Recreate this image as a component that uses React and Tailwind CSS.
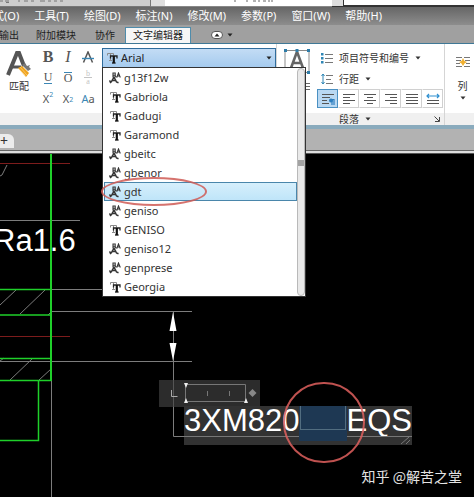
import React, { useState } from 'react';
import clsx from 'clsx';

const MENUS = ['式(O)', '工具(T)', '绘图(D)', '标注(N)', '修改(M)', '参数(P)', '窗口(W)', '帮助(H)'];

const FONTS = [
  { name: 'g13f12w', kind: 'shx' },
  { name: 'Gabriola', kind: 'ttf' },
  { name: 'Gadugi', kind: 'ttf' },
  { name: 'Garamond', kind: 'ttf' },
  { name: 'gbeitc', kind: 'shx' },
  { name: 'gbenor', kind: 'shx' },
  { name: 'gdt', kind: 'shx' },
  { name: 'geniso', kind: 'shx' },
  { name: 'GENISO', kind: 'ttf' },
  { name: 'geniso12', kind: 'shx' },
  { name: 'genprese', kind: 'shx' },
  { name: 'Georgia', kind: 'ttf' },
];

// Line segments of each align icon: [x1, x2] from top to bottom
const ALIGNS = [
  { label: '左对齐', lines: [[1, 13], [1, 8], [1, 13], [1, 8]] },
  { label: '居中', lines: [[1, 13], [4, 10], [1, 13], [4, 10]] },
  { label: '右对齐', lines: [[1, 13], [6, 13], [1, 13], [6, 13]] },
  { label: '对正', lines: [[1, 13], [1, 13], [1, 13], [1, 13]] },
];

function Caret({ className }) {
  return (
    <svg viewBox="0 0 6 4" className={clsx('h-1 w-1.5 shrink-0', className)} fill="currentColor">
      <path d="M0.5 0.5h5L3 3.5z" />
    </svg>
  );
}

function FontIcon({ kind }) {
  if (kind === 'ttf') {
    return (
      <svg viewBox="0 0 12 12" className="h-3 w-3 shrink-0" fill="none">
        <path d="M1.5 3.5v-2h6v2M4.500 1.500v7M3 8.500h3" stroke="#8a8a8a" />
        <path d="M4.500 6.500V4h6.500v2.500" stroke="#222" strokeWidth="1.300" />
        <path d="M7.800 4v7" stroke="#111" strokeWidth="2.200" />
        <path d="M6 11h3.600" stroke="#111" strokeWidth="1.300" />
      </svg>
    );
  }
  return (
    <svg viewBox="0 0 12 12" className="h-3 w-3 shrink-0" fill="none" stroke="#333">
      <path d="M1 11l1.500-1.500L5 5l2.500 5 2 .8M2.500 8.500h5M0.500 8.500L2 11" strokeWidth="1.500" />
      <path d="M4 5.500V1h2.200v2.200H4M6 3.200l1.200 2.300M7.800 5.500L9.500 1l1.800 4.500M8.300 4h2.400" strokeWidth="1.100" />
    </svg>
  );
}

function MatchIcon() {
  return (
    <svg viewBox="0 0 26 28" className="h-7 w-[26px]" fill="none">
      <path d="M2 25L11 3h2l5 13" stroke="#555" strokeWidth="4" />
      <path d="M6 17h9" stroke="#555" strokeWidth="3" />
      <path d="M16 15l6 6 3-2-2-2 1-2-3 1-2-3z" fill="#777" />
      <path d="M12 18l4-2 7 7-3 4z" fill="#f0a31c" />
      <path d="M14 17l7 8M12.500 18.500l7 7" stroke="#fbd58a" strokeWidth="0.700" />
    </svg>
  );
}

function FrameIcon() {
  return (
    <svg viewBox="0 0 28 28" className="h-7 w-7" fill="none">
      <path d="M2 2.500h24v22H2z" stroke="#8b8b8b" />
      <path d="M8 20L13.500 5h1L20 20M9.500 15h9" stroke="#666" strokeWidth="2.600" />
      <path d="M1 1h3v3H1zM12.500 1h3v3h-3zM24 1h3v3h-3zM24 23h3v3h-3zM1 23h3v3H1z" fill="#2e7ca8" />
    </svg>
  );
}

function FormatButtons() {
  const cell = 'flex h-[21px] w-5 items-center justify-center font-["Liberation_Serif",serif] text-[#555]';
  return (
    <div className="grid grid-cols-[20px_20px_22px] content-start pt-0.5">
      <button aria-label="粗体" className={clsx(cell, 'text-base font-bold')}>B</button>
      <button aria-label="斜体" className={clsx(cell, 'text-base italic')}>I</button>
      <button aria-label="删除线" className={cell}>
        <svg viewBox="0 0 12 12" className="h-3 w-3" fill="none">
          <path d="M1.500 11.500L6 1l4.500 10.500" stroke="#555" strokeWidth="1.500" />
          <path d="M0 7.500h12" stroke="#3b87b5" strokeWidth="1.400" />
        </svg>
      </button>
      <button aria-label="下划线" className={cell}>
        <span className="border-b border-[#3b87b5] text-xs leading-[11px]">U</span>
      </button>
      <button aria-label="上划线" className={cell}>
        <span className="border-t border-[#3b87b5] text-xs leading-[11px]">O</span>
      </button>
      <button aria-label="堆叠" disabled className={cell}>
        <span className="flex flex-col items-center text-[8px] leading-[7px] text-[#c4c4c4]">
          <span className="border-b border-[#c4c4c4] px-0.5">b</span>
          <span>a</span>
        </span>
      </button>
      <button aria-label="上标" className={clsx(cell, 'font-["Noto_Sans",sans-serif] text-[11px]')}>
        X<sup className="text-[7px] text-[#3b87b5]">2</sup>
      </button>
      <button aria-label="下标" className={clsx(cell, 'font-["Noto_Sans",sans-serif] text-[11px]')}>
        X<sub className="text-[7px] text-[#3b87b5]">2</sub>
      </button>
      <button aria-label="更改大小写" className={clsx(cell, 'font-["Noto_Sans",sans-serif] text-[11px]')}>
        <span className="text-[#3b87b5]">A</span>a
      </button>
    </div>
  );
}

function FontPicker({ font, onChange }) {
  const [active, setActive] = useState('gdt');

  return (
    <div className="relative mt-1 h-5 w-[174px] shrink-0">
      <select
        aria-label="字体"
        value={font}
        onChange={(e) => onChange(e.target.value)}
        className="h-5 w-full appearance-none border border-[#2f6c9c] bg-linear-to-b from-[#c3dcf5] to-[#a5cbee] pl-[18px] text-[11px] leading-4 text-[#222] outline-none"
      >
        <option>Arial</option>
        {FONTS.map((f) => (
          <option key={f.name}>{f.name}</option>
        ))}
      </select>
      <span className="pointer-events-none absolute top-1 left-1">
        <FontIcon kind="ttf" />
      </span>
      <Caret className="pointer-events-none absolute top-2 right-1 text-[#222]" />

      {/* Opened font list */}
      <div className="absolute top-[19px] left-0 z-10 flex w-[204px] border border-[#333] bg-white">
        <ul className="flex-1 pl-px">
          {FONTS.map((f) => (
            <li key={f.name} className="relative">
              <button
                onClick={() => {
                  setActive(f.name);
                  onChange(f.name);
                }}
                className={clsx(
                  'flex h-[19px] w-full items-center gap-[3px] border pl-1 text-left text-[11px] leading-4 text-[#333]',
                  active === f.name ? 'border-[#4a86ab] bg-linear-to-b from-[#d6effc] to-[#bfe5f9]' : 'border-transparent'
                )}
              >
                <FontIcon kind={f.kind} />
                {f.name}
              </button>
              {f.name === 'gdt' && (
                <span className="pointer-events-none absolute -top-[5px] -left-[3px] h-[29px] w-[106px] rounded-[50%] border-2 border-[#cf5a55]/85" />
              )}
            </li>
          ))}
        </ul>
        {/* Scrollbar */}
        <div className="flex w-2 flex-col rounded-sm border border-[#b9b9b9] bg-[#e9e9e9] pt-[91px]">
          <div className="h-1.5 bg-[#a2a2a2]" />
        </div>
      </div>
    </div>
  );
}

function ParagraphPanel() {
  const alignButton = 'flex h-[19px] w-[21px] items-center justify-center border border-[#d0d0d0] border-l-transparent';
  return (
    <section className="flex w-[134px] shrink-0 flex-col border-r border-[#d5d5d5] pl-1.5">
      <button className="mt-1 flex h-[19px] items-center gap-1.5 pl-1 text-[#333]">
        <svg viewBox="0 0 12 12" className="h-3 w-3" fill="none">
          <path d="M4 2.500h8M4 6.500h8M4 10.500h8" stroke="#777" />
          <path d="M0 1h2.500v2.500H0zM0 5h2.500v2.500H0zM0 9h2.500v2.500H0z" fill="#2e86b5" />
        </svg>
        <span>项目符号和编号</span>
        <Caret />
      </button>
      <button className="mt-0.5 flex h-[19px] items-center gap-1.5 pl-1 text-[#333]">
        <svg viewBox="0 0 12 12" className="h-3 w-3" fill="none">
          <path d="M5 2.500h7M5 6.500h5M5 10.500h7" stroke="#777" />
          <path d="M2 1v10M0.500 3L2 1l1.500 2M0.500 9L2 11l1.500-2" stroke="#2e86b5" />
        </svg>
        <span>行距</span>
        <Caret />
      </button>
      <div className="mt-px flex">
        <button aria-label="默认" className="flex h-[19px] w-[21px] items-center justify-center border border-[#4a90c2] bg-[#b9d8f2]">
          <svg viewBox="0 0 14 12" className="h-3 w-3.5" fill="none">
            <path d="M1 1.500h12M1 4.500h8M1 7.500h5M1 10.500h7" stroke="#555" />
            <path d="M13 6v6M11 6v6M13.500 6.500h-3" stroke="#2e7fc0" strokeWidth="1.200" />
            <circle cx="10" cy="7.500" r="2" fill="#2e7fc0" />
          </svg>
        </button>
        {ALIGNS.map((a) => (
          <button key={a.label} aria-label={a.label} className={alignButton}>
            <svg viewBox="0 0 14 12" className="h-3 w-3.5" stroke="#555">
              {a.lines.map(([x1, x2], i) => (
                <path key={i} d={`M${x1} ${1.5 + i * 3}H${x2}`} />
              ))}
            </svg>
          </button>
        ))}
        <button aria-label="分散对齐" className={alignButton}>
          <svg viewBox="0 0 14 12" className="h-3 w-3.5" fill="none">
            <path d="M1 3h12M3 1L1 3l2 2M11 1l2 2-2 2" stroke="#2e8fd0" strokeWidth="1.200" />
            <path d="M1 7.500h12M1 10.500h12" stroke="#555" />
          </svg>
        </button>
      </div>
    </section>
  );
}

function Ribbon() {
  const [font, setFont] = useState('Arial');

  return (
    <div className="border-t border-[#3f7896] bg-white text-[10px] leading-3">
      <div className="flex h-[69px]">
        <button className="flex w-[38px] shrink-0 flex-col items-center gap-0.5 pt-1.5 text-[#333]">
          <MatchIcon />
          <span>匹配</span>
        </button>
        <FormatButtons />
        <div className="w-0.5" />
        <FontPicker font={font} onChange={setFont} />
        <div className="flex w-[35px] shrink-0 flex-col items-end border-l border-[#d5d5d5] pt-1">
          <FrameIcon />
          <svg viewBox="0 0 8 10" className="mt-1.5 h-2.5 w-2" stroke="#666">
            <path d="M0 1.500h7M0 4.500h7M0 7.500h7" />
          </svg>
        </div>
        <ParagraphPanel />
        <button className="flex flex-1 flex-col items-center pt-3 pl-1.5 text-[#333]">
          <svg viewBox="0 0 14 14" className="mb-2.5 h-3.5 w-3.5" fill="none">
            <path d="M0 1.500h6M8 1.500h6M0 4.500h5M9 4.500h5M0 7.500h4M10 7.500h4M0 10.500h6M8 10.500h6" stroke="#777" />
            <path d="M7 2l1.500 3L11 6 8.500 7.500 7 10 5.500 7.500 3 6l2.500-1z" fill="#f0b030" />
          </svg>
          <span>列</span>
          <Caret className="mt-1" />
        </button>
      </div>
      {/* Panel titles */}
      <div className="flex h-3 items-center bg-[#f0f0f0] text-[#333]">
        <div className="w-[309px] shrink-0" />
        <div className="flex h-3 w-[136px] shrink-0 items-center border-r border-[#d5d5d5] pl-[30px]">
          <span>段落</span>
          <Caret className="ml-1.5" />
          <svg viewBox="0 0 6 6" className="mr-1 ml-auto h-1.5 w-1.5" fill="none" stroke="#444">
            <path d="M0.500 0.500L5 5M5.500 1v4.500H1" />
          </svg>
        </div>
      </div>
      <div className="h-1 bg-[#8aabbd]" />
    </div>
  );
}

function Drawing() {
  return (
    <svg width="474" height="343" viewBox="0 154 474 343" className="absolute top-0 left-0" fill="none">
      <g stroke="#7c7c7c">
        <path d="M0 176l2-1 5-10M0 220.500h80M51 289.500h51M51 311.500h141M0 361.500h192" />
        <path d="M0 305l16-15M20 314l25-24M10 380l22-21M39 380l12-11M0 361l4-3M48 315l3-3" />
        <path d="M51.500 380v117M173.500 312v124.500h238" />
      </g>
      <path d="M0 163.500h70M0 336.500h70" stroke="#7d1c1c" />
      <g stroke="#1fd02a">
        <path d="M51 154v227" strokeWidth="2" />
        <path d="M0 289.500h51M0 315h51M0 358.500h51M0 380.500h51M38.500 380v60.500H0" strokeWidth="1.500" />
      </g>
      <path d="M173 312l3.500 19h-7zM173 361l3.500-18h-7z" fill="#fff" />
    </svg>
  );
}

function TextRuler() {
  return (
    <svg width="101" height="27" viewBox="0 0 101 27" className="absolute top-[226px] left-[159px] bg-[#2c2c2c]" fill="none">
      <path d="M14.500 0v27" stroke="#555" />
      <path d="M12.500 10v6.500h6" stroke="#aaa" />
      <path d="M26.500 4.500h60v17h-60zM48.500 11v5M70.500 11v5" stroke="#777" />
      <path d="M25 3h4l-2 5zM25 23h4l-2-5zM85 23h4l-2-5z" fill="#eee" />
      <path d="M93.500 9l4 4-4 4-4-4z" fill="#888" />
    </svg>
  );
}

function Canvas() {
  return (
    <main className="relative h-[343px] overflow-hidden bg-black font-['Liberation_Sans',sans-serif] text-white">
      <Drawing />
      <p className="absolute top-[69px] -left-[7px] text-[31px] leading-9">Ra1.6</p>
      <TextRuler />
      {/* In-place text editor */}
      <div className="absolute top-[252px] left-[184px] flex h-[39px] w-[228px] bg-[#323232] text-[31px] leading-[30px]">
        <span>3XM820</span>
        <span className="h-[35px] w-12 bg-[#1e3853]">
          <span className="mx-px block h-6 border border-t-0 border-[#526d80]" />
        </span>
        <span>EQS</span>
        <svg viewBox="0 0 228 10" className="absolute bottom-0 left-0 h-2.5 w-full" fill="none" stroke="#777">
          <path d="M0 1.500h115M163 1.500h65M217 9l8-7M222 9l4-4" />
        </svg>
      </div>
      <span className="absolute top-[228px] left-[283px] h-[81px] w-[82px] rounded-full border-2 border-[#e0605e]/85" />
      <p className="absolute right-3 bottom-[11px] font-['Noto_Sans_CJK_SC',sans-serif] text-sm leading-5 text-[#e4e4e4]">
        知乎 @解苦之堂
      </p>
    </main>
  );
}

export default function App() {
  return (
    <div className="min-h-screen overflow-hidden bg-black font-['Noto_Sans','Noto_Sans_CJK_SC',sans-serif]">
      <div className="flex h-[7px] bg-white">
        <div className="w-[151px] border-r border-b border-[#777] bg-[#cdcdcd]">
          <svg viewBox="0 0 66 3" className="h-[3px] w-[66px]" stroke="#777">
            <path d="M0 1h3M5 1h4M6 2.500h3M19 0v2M24 1h4M31 1h3M40 1h5M48 1h3M54 1h3M60 1h3" />
          </svg>
        </div>
        <div className="w-3.5 border-b border-[#888] bg-[#dedede]" />
        <div className="w-[167px] border-b border-[#888]">
          <svg viewBox="0 0 110 3" className="h-[3px] w-[110px]" stroke="#666">
            <path d="M69 1h2M82 0v2M88 1h3M94 0v2M98 1h3M104 0v2M107 0v2" />
          </svg>
        </div>
        <div className="w-3 border-r border-b border-[#333] bg-[#dedede]" />
        <div className="flex-1 border-b-2 border-[#333]" />
      </div>

      <nav className="flex h-[18px] gap-[15px] overflow-hidden bg-linear-to-b from-[#666] to-[#8d8d8d] text-[11px] leading-[18px] whitespace-nowrap text-white">
        {MENUS.map((m) => (
          <button key={m} className="shrink-0 first:-ml-[7px]">{m}</button>
        ))}
      </nav>

      <div className="flex h-[18px] items-end bg-[#a0a0a0] text-[10px] leading-[15px] text-[#222]">
        <button className="-ml-px">输出</button>
        <button className="ml-[17px]">附加模块</button>
        <button className="ml-[19px]">协作</button>
        <button className="ml-2.5 border border-b-0 border-[#4f8cab] bg-[#f6f6f6] px-[7px]">文字编辑器</button>
        <button aria-label="最小化功能区" className="mb-1 ml-5 flex items-center gap-1">
          <span className="flex h-2 w-3 items-center justify-center rounded-sm border border-[#555] bg-white">
            <Caret className="rotate-180" />
          </span>
          <Caret />
        </button>
      </div>

      <Ribbon />

      {/* File tabs */}
      <div className="flex h-[21px] items-end bg-[#b2b2b2]">
        <button
          aria-label="新图形"
          className="mb-0.5 h-3.5 w-3.5 rounded-tr-md bg-[#ececec] pr-1.5 text-sm leading-3.5 text-[#333]"
        >
          +
        </button>
      </div>
      <div className="h-1 border-t border-b border-t-[#666] border-b-[#555] bg-[#ddd]" />

      <Canvas />
    </div>
  );
}
